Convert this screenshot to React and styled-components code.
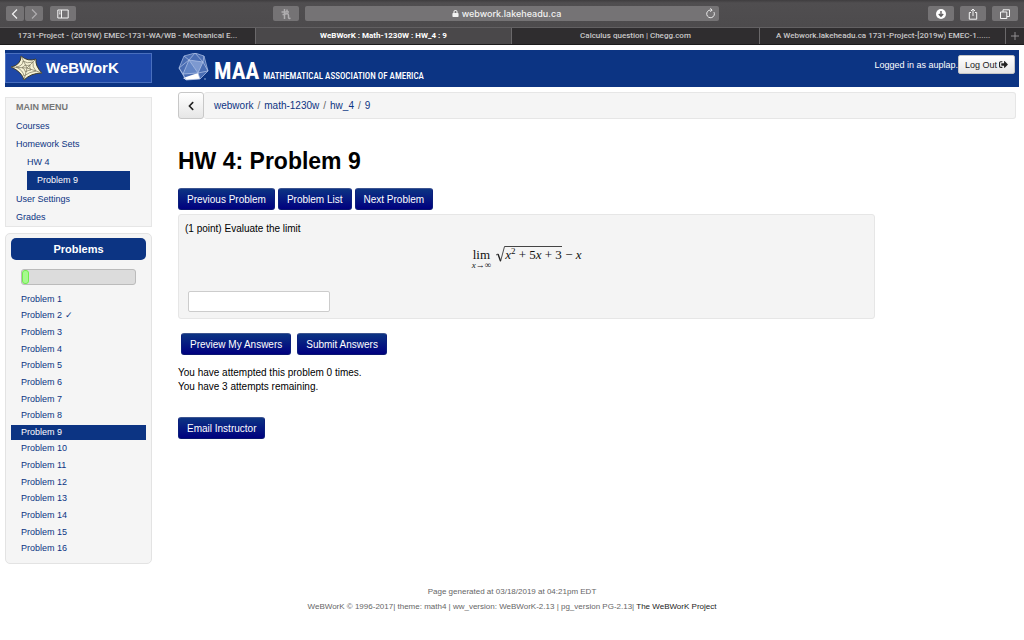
import React, { useState } from 'react'
import styled, { createGlobalStyle, css } from 'styled-components'
import { FaChevronLeft, FaSignOutAlt, FaLock } from 'react-icons/fa'

const blue = '#0c3483'
const panel = '#f5f5f5'

const GlobalStyle = createGlobalStyle`
* { box-sizing: border-box; }
body {
  margin: 0;
  background: #fff;
  color: #000;
  font-family: "Liberation Sans", Arial, sans-serif;
  font-size: 10px;
  line-height: 14px;
}
a { color: ${blue}; text-decoration: none; }
ul { list-style: none; margin: 0; padding: 0; }
button, input { font-family: inherit; }
p, h1, h2 { margin: 0; }
`

/* browser window */

const Chrome = styled.div`
  background: linear-gradient(#3f3d3f, #504e50 3px, #4a484a);
  font-family: Inter, Roboto, sans-serif;
  color: #f2f2f2;
`
const Toolbar = styled.div`
  display: grid;
  grid-template-columns: 261fr 26px 414fr 293fr;
  gap: 6px;
  padding: 6px;
`
const ToolGroup = styled.div`
  display: flex;
  gap: ${props => props.$gap}px;
  justify-content: ${props => (props.$end ? 'flex-end' : 'flex-start')};
`
const ToolButton = styled.button`
  display: flex;
  align-items: center;
  justify-content: center;
  width: ${props => (props.$small ? '18px' : '26px')};
  height: 15px;
  padding: 0;
  border: 0;
  border-radius: 2px;
  background: #757375;
  color: ${props => (props.$dim ? '#b0aeb0' : '#f4f4f4')};
`
const Address = styled.div`
  display: flex;
  align-items: center;
  height: 15px;
  padding: 0 3px;
  border-radius: 2px;
  background: #757375;
`
const Url = styled.span`
  display: flex;
  flex: 1;
  align-items: center;
  justify-content: center;
  gap: 3px;
  font-size: 9px;
  font-weight: 500;
`
const Reload = styled.button`
  display: flex;
  padding: 0;
  border: 0;
  background: none;
  color: #f4f4f4;
`
const Tabs = styled.nav`
  display: grid;
  grid-template-columns: 256fr 256fr 248fr 246fr 18px;
  border-top: 1px solid #626062;
  border-bottom: 1px solid #1c1b1c;
  font-family: Roboto, Inter, sans-serif;
`
const Tab = styled.a`
  height: 16px;
  padding: 0 16px;
  border-right: 1px solid #6a686a;
  background: ${props => (props.$active ? '#4a484a' : '#2f2d2f')};
  color: ${props => (props.$active ? '#fff' : '#c9c8c9')};
  font-size: 8px;
  font-weight: ${props => (props.$active ? 700 : 500)};
  line-height: 16px;
  text-align: center;
  white-space: nowrap;
  overflow: hidden;
`
const NewTab = styled.button`
  display: flex;
  align-items: center;
  justify-content: center;
  padding: 0;
  border: 0;
  background: #2f2d2f;
  color: #9b999b;
`

/* page */

const Page = styled.div`
  padding: 5px;
`
const Masthead = styled.header`
  display: flex;
  height: 37px;
  padding: 3px 4px 3px 0;
  background: ${blue};
  color: #fff;
`
const Brand = styled.a`
  display: flex;
  align-items: center;
  gap: 3px;
  width: 147px;
  height: 30px;
  padding-left: 5px;
  margin-right: 26px;
  border: 1px solid #496fbe;
  background: #1e48a8;
  color: #fff;
  font-size: 15px;
  font-weight: bold;
`
const Maa = styled.a`
  display: flex;
  gap: 5px;
  flex: 1;
  color: #fff;
  font-family: "Roboto Condensed", "Open Sans Condensed", Roboto, sans-serif;
  font-weight: bold;
  white-space: nowrap;
`
const MaaName = styled.span`
  display: flex;
  align-items: baseline;
  gap: 4px;
`
const MaaShort = styled.span`
  font-size: 23px;
  line-height: 38px;
`
const MaaLong = styled.span`
  font-size: 9px;
  font-weight: 500;
`
const Login = styled.div`
  display: flex;
  align-items: center;
  height: 19px;
  margin-top: 2px;
  font-size: 9px;
`
const LogoutButton = styled.button`
  display: flex;
  align-items: center;
  gap: 2px;
  height: 19px;
  padding: 0 6px;
  border: 1px solid #c5c5c5;
  border-radius: 2px;
  background: linear-gradient(#fff, #e6e6e6);
  color: #222;
  font-size: 9px;
`
const Columns = styled.div`
  display: grid;
  grid-template-columns: 147px 1fr;
  gap: 26px;
  padding-right: 3px;
`
const Sidebar = styled.aside`
  display: flex;
  flex-direction: column;
  gap: 6px;
  padding-top: 10px;
  font-size: 9px;
`
const Menu = styled.nav`
  padding: 0 21px 0 10px;
  border: 1px solid #e6e6e6;
  background: ${panel};
`
const MenuTitle = styled.h2`
  color: #777;
  font-size: 9px;
  line-height: 19px;
`
const MenuLink = styled.a`
  display: block;
  line-height: 18px;
  margin-left: ${props => (props.$level ? 11 : 0)}px;
  ${props =>
    props.$active &&
    css`
      padding-left: 10px;
      background: ${blue};
      color: #fff;
      line-height: 19px;
    `}
`
const ProblemsPanel = styled.nav`
  padding: 4px 5px 6px;
  border: 1px solid #e3e3e3;
  border-radius: 5px;
  background: ${panel};
`
const ProblemsTitle = styled.h2`
  border-radius: 5px;
  background: ${blue};
  color: #fff;
  font-size: 11px;
  line-height: 22px;
  text-align: center;
`
const Progress = styled.div`
  height: 16px;
  margin: 9px 10px 6px;
  border: 1px solid #bbb;
  border-radius: 3px;
  background: #dcdcdc;
`
const ProgressBar = styled.div`
  height: 100%;
  border: 1px solid #6fee4c;
  border-radius: 3px;
  background: #a6fa8e;
`
const ProblemList = styled.ul`
  display: flex;
  flex-direction: column;
  height: 266px;
`
const ProblemItem = styled.li`
  display: flex;
  flex: 1;
  align-items: center;
`
const ProblemLink = styled.a`
  flex: 1;
  padding-left: 10px;
  line-height: 15px;
  ${props =>
    props.$active &&
    css`
      background: ${blue};
      color: #fff;
    `}
`
const Main = styled.main`
  padding-top: 5px;
`
const Crumbs = styled.nav`
  display: flex;
  height: 27px;
`
const BackLink = styled.a`
  display: flex;
  align-items: center;
  justify-content: center;
  width: 26px;
  border: 1px solid #c8c8c8;
  border-radius: 3px;
  background: linear-gradient(#fff, #e6e6e6);
  color: #222;
`
const CrumbList = styled.div`
  display: flex;
  flex: 1;
  align-items: center;
  gap: 4px;
  padding-left: 10px;
  border: 1px solid #e6e6e6;
  border-left: 0;
  border-radius: 3px;
  background: ${panel};
  color: #666;
`
const Title = styled.h1`
  margin: 28px 0 13px;
  font-size: 23px;
  line-height: 28px;
`
const ButtonRow = styled.div`
  display: flex;
  gap: ${props => props.$gap || 3}px;
`
const Button = styled.button`
  height: 22px;
  padding: 0 8px;
  border: 1px solid;
  border-color: #3d5490 #0b1f7c #0a1670;
  border-radius: 3px;
  background: linear-gradient(#0c3483, #00007f);
  color: #fff;
  font-size: 10px;
`
const Problem = styled.section`
  width: 83.2%;
  margin: 4px 0 14px;
  padding: 7px 6px 6px;
  border: 1px solid #e6e6e6;
  border-radius: 3px;
  background: #f4f4f4;
`
const Formula = styled.div`
  display: flex;
  justify-content: center;
  gap: 4px;
  margin: 10px 0 24px;
  color: #111;
  font-family: "Liberation Serif", "Times New Roman", serif;
  font-size: 13px;
  line-height: 18px;
  white-space: nowrap;
`
const Limit = styled.span`
  display: flex;
  flex-direction: column;
  align-items: center;
`
const LimitUnder = styled.span`
  font-size: 9px;
  line-height: 3px;
`
const Root = styled.span`
  display: flex;
  align-items: flex-start;
`
const Radicand = styled.span`
  border-top: 1px solid #444;
  line-height: 16px;
  sup {
    font-size: 9px;
    line-height: 0;
    vertical-align: 5px;
  }
`
const Answer = styled.input`
  display: block;
  width: 142px;
  height: 21px;
  margin-left: 3px;
  border: 1px solid #ccc;
  border-radius: 2px;
  background: #fff;
`
const Submit = styled.div`
  padding-left: 3px;
`
const Status = styled.div`
  margin: 11px 0 23px;
`
const Footer = styled.footer`
  margin-top: 20px;
  color: #666;
  font-size: 8px;
  line-height: 15px;
  text-align: center;
  a { color: #222; }
`

const WebStar = () => (
  <svg width="32" height="26" viewBox="0 0 32 26" fill="none">
    <path
      d="M10 1Q17 7 25 4Q24 11 31 18Q20 18 13 25Q11 17 0 12Q10 10 10 1Z"
      fill="#f6f2d6"
      stroke="#3a3a2c"
    />
    <path
      d="M10 1L16 13L25 4M16 13L31 18M16 13L13 25M16 13L0 12"
      stroke="#77735c"
      strokeWidth=".7"
    />
    <path
      d="M12 6Q16 9 22 7Q21 12 25 16Q18 17 13 21Q12 15 5 12Q12 11 12 6ZM14 10Q16 11 19 10Q18 13 20 15Q17 15 14.500 17Q14 14 11 12.500Q13 12 14 10Z"
      stroke="#77735c"
      strokeWidth=".7"
    />
  </svg>
)

const Icosahedron = () => (
  <svg width="31" height="29" viewBox="0 0 31 29">
    <path d="M17 0L26 3L30 18L22 26L8 27L1 15L6 3Z" fill="#4a6db3" />
    <path d="M11 7L25 9L20 20Z" fill="#7d99d0" />
    <path d="M11 7L20 20L5 21Z" fill="#6385c5" />
    <path d="M5 25L20 20L22 26L8 27Z" fill="#fff" />
    <path
      d="M17 0L26 3L30 18L22 26L8 27L1 15L6 3ZM6 3L11 7L17 0L25 9L11 7L5 21L1 15L11 7L20 20L25 9L30 18L20 20L22 26M26 3L25 9M5 21L20 20M5 21L8 27"
      fill="none"
      stroke="#b4c5e8"
      strokeWidth=".7"
      strokeLinejoin="round"
    />
    <circle cx="27" cy="26" r=".7" fill="#c3d2ee" />
  </svg>
)

const Stroke = ({ d, size = 12, width = 1.2 }) => (
  <svg
    width={size}
    height={size}
    viewBox="0 0 12 12"
    fill="none"
    stroke="currentColor"
    strokeWidth={width}
  >
    <path d={d} />
  </svg>
)

const tabs = [
  '1731-Project - (2019W) EMEC-1731-WA/WB - Mechanical E...',
  'WeBWorK : Math-1230W : HW_4 : 9',
  'Calculus question | Chegg.com',
  'A Webwork.lakeheadu.ca 1731-Project-[2019w) EMEC-1......',
]

const menu = [
  { label: 'Courses' },
  { label: 'Homework Sets' },
  { label: 'HW 4', level: 1 },
  { label: 'Problem 9', level: 1, active: true },
  { label: 'User Settings' },
  { label: 'Grades' },
]

const crumbs = ['webwork', 'math-1230w', 'hw_4', '9']
const problems = Array.from({ length: 16 }, (_, i) => i + 1)
const solved = [2]
const current = 9

const BrowserBar = () => (
  <Chrome>
    <Toolbar>
      <ToolGroup $gap={7}>
        <ToolGroup $gap={1}>
          <ToolButton $small aria-label="Back">
            <Stroke d="M8 1.500L3.500 6L8 10.500" />
          </ToolButton>
          <ToolButton $small $dim aria-label="Forward">
            <Stroke d="M4 1.500L8.500 6L4 10.500" />
          </ToolButton>
        </ToolGroup>
        <ToolButton aria-label="Sidebar">
          <Stroke d="M.8 2H11.200V10H.8ZM4.500 2V10M2 4H3.500M2 5.800H3.500" width={1} />
        </ToolButton>
      </ToolGroup>
      <ToolButton $dim aria-label="Honey">
        <Stroke
          d="M4.500 1V11M1.500 4H9M2.500 6.500H4.500Q6 5.500 7.500 5.800Q8.500 6 8.500 7.500V9.500Q8.500 10.700 10.500 10.300M7 1.500V4"
          width={1.5}
        />
      </ToolButton>
      <Address>
        <Url>
          <FaLock size={7} />
          webwork.lakeheadu.ca
        </Url>
        <Reload aria-label="Reload">
          <Stroke d="M9.800 4.500A4.200 4.200 0 1 1 6 2.200H7.500M5.800 .3L7.800 2.200L5.800 4.200" size={11} width={1} />
        </Reload>
      </Address>
      <ToolGroup $gap={6} $end>
        <ToolButton aria-label="Downloads">
          <svg width="10" height="10" viewBox="0 0 10 10">
            <circle cx="5" cy="5" r="5" fill="#fff" />
            <path d="M5 2V7M2.800 5L5 7.300L7.200 5" fill="none" stroke="#5f5d5f" strokeWidth="1.400" />
          </svg>
        </ToolButton>
        <ToolButton aria-label="Share">
          <Stroke d="M4 4.500H2.300V11.200H9.700V4.500H8M6 8V1M4 3L6 1L8 3" width={1} />
        </ToolButton>
        <ToolButton aria-label="Tab overview">
          <Stroke d="M1.500 4H7.800V10.500H1.500ZM4 4V1.800H10.500V8.500H7.800" width={1} />
        </ToolButton>
      </ToolGroup>
    </Toolbar>
    <Tabs>
      {tabs.map((tab, i) => (
        <Tab key={tab} href="#" $active={i === 1}>{tab}</Tab>
      ))}
      <NewTab aria-label="New tab">
        <Stroke d="M6 2V10M2 6H10" width={0.9} />
      </NewTab>
    </Tabs>
  </Chrome>
)

const App = () => {
  const [answer, setAnswer] = useState('')

  return (
    <>
      <GlobalStyle />
      <BrowserBar />
      <Page>
        <Masthead>
          <Brand href="#">
            <WebStar />
            WeBWorK
          </Brand>
          <Maa href="#">
            <Icosahedron />
            <MaaName>
              <MaaShort>MAA</MaaShort>
              <MaaLong>MATHEMATICAL ASSOCIATION OF AMERICA</MaaLong>
            </MaaName>
          </Maa>
          <Login>
            Logged in as auplap.
            <LogoutButton>
              Log Out <FaSignOutAlt size={9} />
            </LogoutButton>
          </Login>
        </Masthead>
        <Columns>
          <Sidebar>
            <Menu>
              <MenuTitle>MAIN MENU</MenuTitle>
              {menu.map(item => (
                <MenuLink key={item.label} href="#" $level={item.level} $active={item.active}>
                  {item.label}
                </MenuLink>
              ))}
            </Menu>
            <ProblemsPanel>
              <ProblemsTitle>Problems</ProblemsTitle>
              <Progress>
                <ProgressBar style={{ width: `${(solved.length / problems.length) * 100}%` }} />
              </Progress>
              <ProblemList>
                {problems.map(n => (
                  <ProblemItem key={n}>
                    <ProblemLink href="#" $active={n === current}>
                      Problem {n}{solved.includes(n) && ' ✓'}
                    </ProblemLink>
                  </ProblemItem>
                ))}
              </ProblemList>
            </ProblemsPanel>
          </Sidebar>
          <Main>
            <Crumbs>
              <BackLink href="#" aria-label="Back to set">
                <FaChevronLeft size={10} />
              </BackLink>
              <CrumbList>
                {crumbs.map((crumb, i) => (
                  <React.Fragment key={crumb}>
                    {i > 0 && <span>/</span>}
                    <a href="#">{crumb}</a>
                  </React.Fragment>
                ))}
              </CrumbList>
            </Crumbs>
            <Title>HW 4: Problem 9</Title>
            <ButtonRow>
              <Button>Previous Problem</Button>
              <Button>Problem List</Button>
              <Button>Next Problem</Button>
            </ButtonRow>
            <Problem>
              <label htmlFor="answer">(1 point) Evaluate the limit</label>
              <Formula>
                <Limit>
                  lim
                  <LimitUnder><i>x</i>→∞</LimitUnder>
                </Limit>
                <Root>
                  <svg width="10" height="17" viewBox="0 0 10 17" fill="none" stroke="#222">
                    <path d="M1 9L3 8" strokeWidth=".8" />
                    <path d="M3 8L5.500 15" strokeWidth="1.400" />
                    <path d="M5.500 15.500L9.500 .5H10" strokeWidth=".8" />
                  </svg>
                  <Radicand><i>x</i><sup>2</sup> + 5<i>x</i> + 3</Radicand>
                  <span>&nbsp;− <i>x</i></span>
                </Root>
              </Formula>
              <Answer id="answer" value={answer} onChange={e => setAnswer(e.target.value)} />
            </Problem>
            <Submit>
              <ButtonRow $gap={6}>
                <Button>Preview My Answers</Button>
                <Button>Submit Answers</Button>
              </ButtonRow>
            </Submit>
            <Status>
              <p>You have attempted this problem 0 times.</p>
              <p>You have 3 attempts remaining.</p>
            </Status>
            <Button>Email Instructor</Button>
          </Main>
        </Columns>
        <Footer>
          <p>Page generated at 03/18/2019 at 04:21pm EDT</p>
          <p>
            WeBWorK © 1996-2017| theme: math4 | ww_version: WeBWorK-2.13 | pg_version PG-2.13|{' '}
            <a href="#">The WeBWorK Project</a>
          </p>
        </Footer>
      </Page>
    </>
  )
}

export default App
